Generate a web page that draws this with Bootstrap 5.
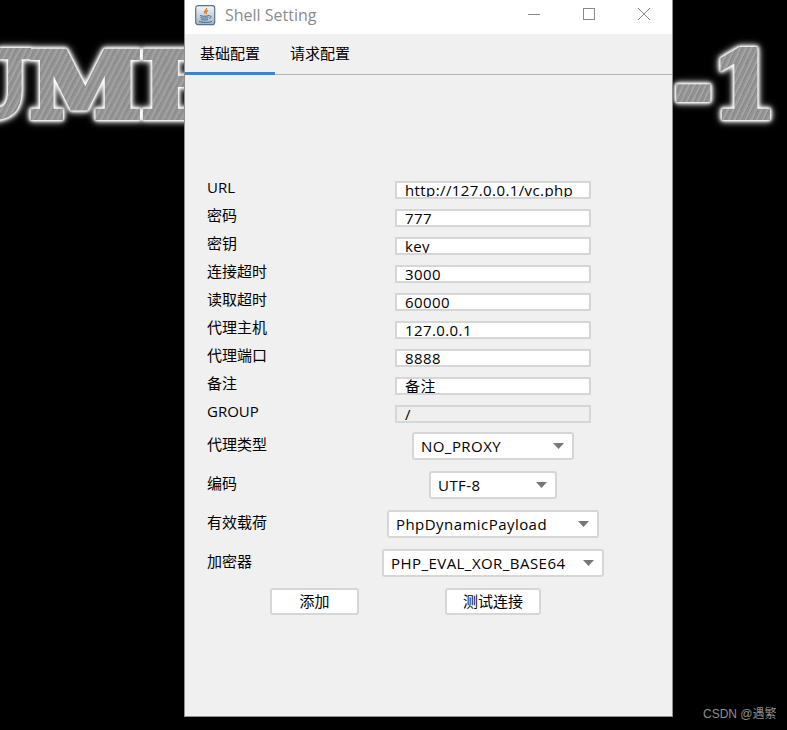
<!DOCTYPE html>
<html lang="zh">
<head>
<meta charset="utf-8">
<title>Shell Setting</title>
<link rel="stylesheet" href="https://cdn.jsdelivr.net/npm/bootstrap@5.3.0/dist/css/bootstrap.min.css">
<style>
html,body{height:730px;overflow:hidden;background:#000;}
body{font-family:"Open Sans","Noto Sans CJK SC",sans-serif;font-size:15px;color:#000;position:relative;}
.banner{position:absolute;top:20px;font-family:"DejaVu Serif",serif;font-weight:700;font-size:90px;line-height:130px;white-space:nowrap;color:transparent;transform-origin:0 50%;padding:0 8px;
 background:repeating-linear-gradient(115deg,#929292 0 2px,#a2a2a2 2px 4px,#8a8a8a 4px 5px);-webkit-background-clip:text;background-clip:text;
 -webkit-text-stroke:6px transparent;filter:drop-shadow(0 0 1px #fff) drop-shadow(0 0 1px #fff) drop-shadow(0 0 2px #fff) drop-shadow(0 0 3px #bbb);}
.banner-left{left:-67px;transform:scaleX(1.12);}
.banner-right{left:666px;transform:scaleX(1.02);}
.app-window{position:relative;z-index:1;margin-left:184px;width:489px;height:717px;background:#f0f0f0;border:1px solid #8f8f8f;border-top:0;}
.title-strip{height:34px;background:#fff;padding:5px 0 0 10px;}
.title-name{color:#8b8b8b;font-size:16px;line-height:20px;margin-left:9px;}
.win-btns{margin-left:auto;gap:43px;padding:3px 22px 0 0;}
.win-btns svg{display:block;}
.tab-strip.nav-tabs{height:41px;border-bottom:1px solid #b5b5b5;}
.tab-strip .nav-link{color:#000;height:41px;width:90px;padding:9px 0 0;text-align:center;border:0;border-radius:0;background:transparent;font-size:15px;line-height:20px;margin:0;}
.tab-strip .nav-link.active{color:#000;background:transparent;border-bottom:3px solid #3d85c6;}
.form-area{padding:105px 0 0 22px;}
.field-row{display:grid;grid-template-columns:175px 222px;height:28px;align-items:start;}
.field-label{line-height:16px;margin-top:-1px;}
.field-input.form-control{display:block;width:196px;margin:1px 0 0 13px;height:18px;padding:0 7px 1px 8px;border:2px solid #d6d6d6;border-radius:0;background:#fff;font:15px/14px "Open Sans","Noto Sans CJK SC",sans-serif;letter-spacing:.4px;color:#000;box-shadow:none;}
.field-input.form-control:disabled{background:#efefef;color:#000;opacity:1;}
.pick-row{display:grid;grid-template-columns:175px 222px;height:39px;align-items:start;}
.pick-row .field-label{line-height:26px;}
.pick.form-select{display:block;margin:0 auto;height:28px;padding:0 0 0 7px;border:2px solid #d6d6d6;border-radius:3px;background-color:#fff;
 background-image:url("data:image/svg+xml,%3Csvg xmlns='http://www.w3.org/2000/svg' width='11' height='6'%3E%3Cpath d='M0 0h11L5.5 6z' fill='%23777'/%3E%3C/svg%3E");background-size:11px 6px;background-position:right 8px center;font:15px/24px "Open Sans","Noto Sans CJK SC",sans-serif;letter-spacing:.45px;color:#000;box-shadow:none;}
.pick-proxy{width:162px;}.pick-enc{width:128px;}.pick-payload{width:212px;}.pick-crypt{width:222px;}
.action-row{gap:86px;padding-left:63px;}
.action.btn{height:27px;padding:0;border:2px solid #d6d6d6;border-radius:3px;background:#fff;color:#000;font-size:15px;line-height:23px;}
.action-add{width:89px;}.action-test{width:96px;}
.mark-csdn{position:absolute;left:703px;top:706px;color:#8f8f8f;font-size:12px;line-height:16px;font-family:"Liberation Sans","Noto Sans CJK SC",sans-serif;}
</style>
</head>
<body>
<div class="banner banner-left">UMB</div>
<div class="banner banner-right">-1</div>

<div class="app-window d-flex flex-column">
  <div class="title-strip d-flex align-items-start">
    <svg width="21" height="21" viewBox="0 0 21 21" aria-hidden="true">
      <defs><linearGradient id="ic" x1="0" y1="0" x2="0" y2="1"><stop offset="0" stop-color="#f4f6f8"/><stop offset="1" stop-color="#9db4c8"/></linearGradient></defs>
      <rect x=".7" y=".7" width="19" height="19" rx="2.500" fill="url(#ic)" stroke="#5b7288" stroke-width="1.200"/>
      <path d="M11.500 3c1 2-3 3-2 5.500M13 5.500c-2 1-2.500 2-1.500 3.500" fill="none" stroke="#e2761c" stroke-width="1.300"/>
      <path d="M5 10.500c2 1 7 1 9 0M5.500 12.500c2 .8 6 .8 8 0M6 14.500c2 .6 5 .6 7 0M4 16.500c3 1.200 10 1.200 13 0M14 11c2-.8 3 1.500 .5 2.500" fill="none" stroke="#3f6d94" stroke-width="1"/>
    </svg>
    <span class="title-name">Shell Setting</span>
    <div class="win-btns d-flex">
      <svg width="12" height="12" viewBox="0 0 12 12" aria-hidden="true"><path d="M0 6.500h12" stroke="#8a8a8a" fill="none"/></svg>
      <svg width="12" height="12" viewBox="0 0 12 12" aria-hidden="true"><rect x=".5" y=".5" width="11" height="11" stroke="#8a8a8a" fill="none"/></svg>
      <svg width="12" height="12" viewBox="0 0 12 12" aria-hidden="true"><path d="M0 0l12 12M12 0L0 12" stroke="#8a8a8a" fill="none"/></svg>
    </div>
  </div>

  <ul class="nav nav-tabs tab-strip">
    <li class="nav-item"><a class="nav-link active" href="#">基础配置</a></li>
    <li class="nav-item"><a class="nav-link" href="#">请求配置</a></li>
  </ul>

  <form class="form-area">
    <div class="field-row"><span class="field-label">URL</span><input class="form-control field-input" value="http://127.0.0.1/vc.php"></div>
    <div class="field-row"><span class="field-label">密码</span><input class="form-control field-input" value="777"></div>
    <div class="field-row"><span class="field-label">密钥</span><input class="form-control field-input" value="key"></div>
    <div class="field-row"><span class="field-label">连接超时</span><input class="form-control field-input" value="3000"></div>
    <div class="field-row"><span class="field-label">读取超时</span><input class="form-control field-input" value="60000"></div>
    <div class="field-row"><span class="field-label">代理主机</span><input class="form-control field-input" value="127.0.0.1"></div>
    <div class="field-row"><span class="field-label">代理端口</span><input class="form-control field-input" value="8888"></div>
    <div class="field-row"><span class="field-label">备注</span><input class="form-control field-input" value="备注"></div>
    <div class="field-row"><span class="field-label">GROUP</span><input class="form-control field-input" value="/" disabled></div>

    <div class="pick-row"><span class="field-label">代理类型</span><select class="form-select pick pick-proxy"><option>NO_PROXY</option></select></div>
    <div class="pick-row"><span class="field-label">编码</span><select class="form-select pick pick-enc"><option>UTF-8</option></select></div>
    <div class="pick-row"><span class="field-label">有效载荷</span><select class="form-select pick pick-payload"><option>PhpDynamicPayload</option></select></div>
    <div class="pick-row"><span class="field-label">加密器</span><select class="form-select pick pick-crypt"><option>PHP_EVAL_XOR_BASE64</option></select></div>

    <div class="action-row d-flex">
      <button type="button" class="btn action action-add">添加</button>
      <button type="button" class="btn action action-test">测试连接</button>
    </div>
  </form>
</div>

<div class="mark-csdn">CSDN @遇繁</div>
<script src="https://cdn.jsdelivr.net/npm/bootstrap@5.3.0/dist/js/bootstrap.bundle.min.js"></script>
</body>
</html>
